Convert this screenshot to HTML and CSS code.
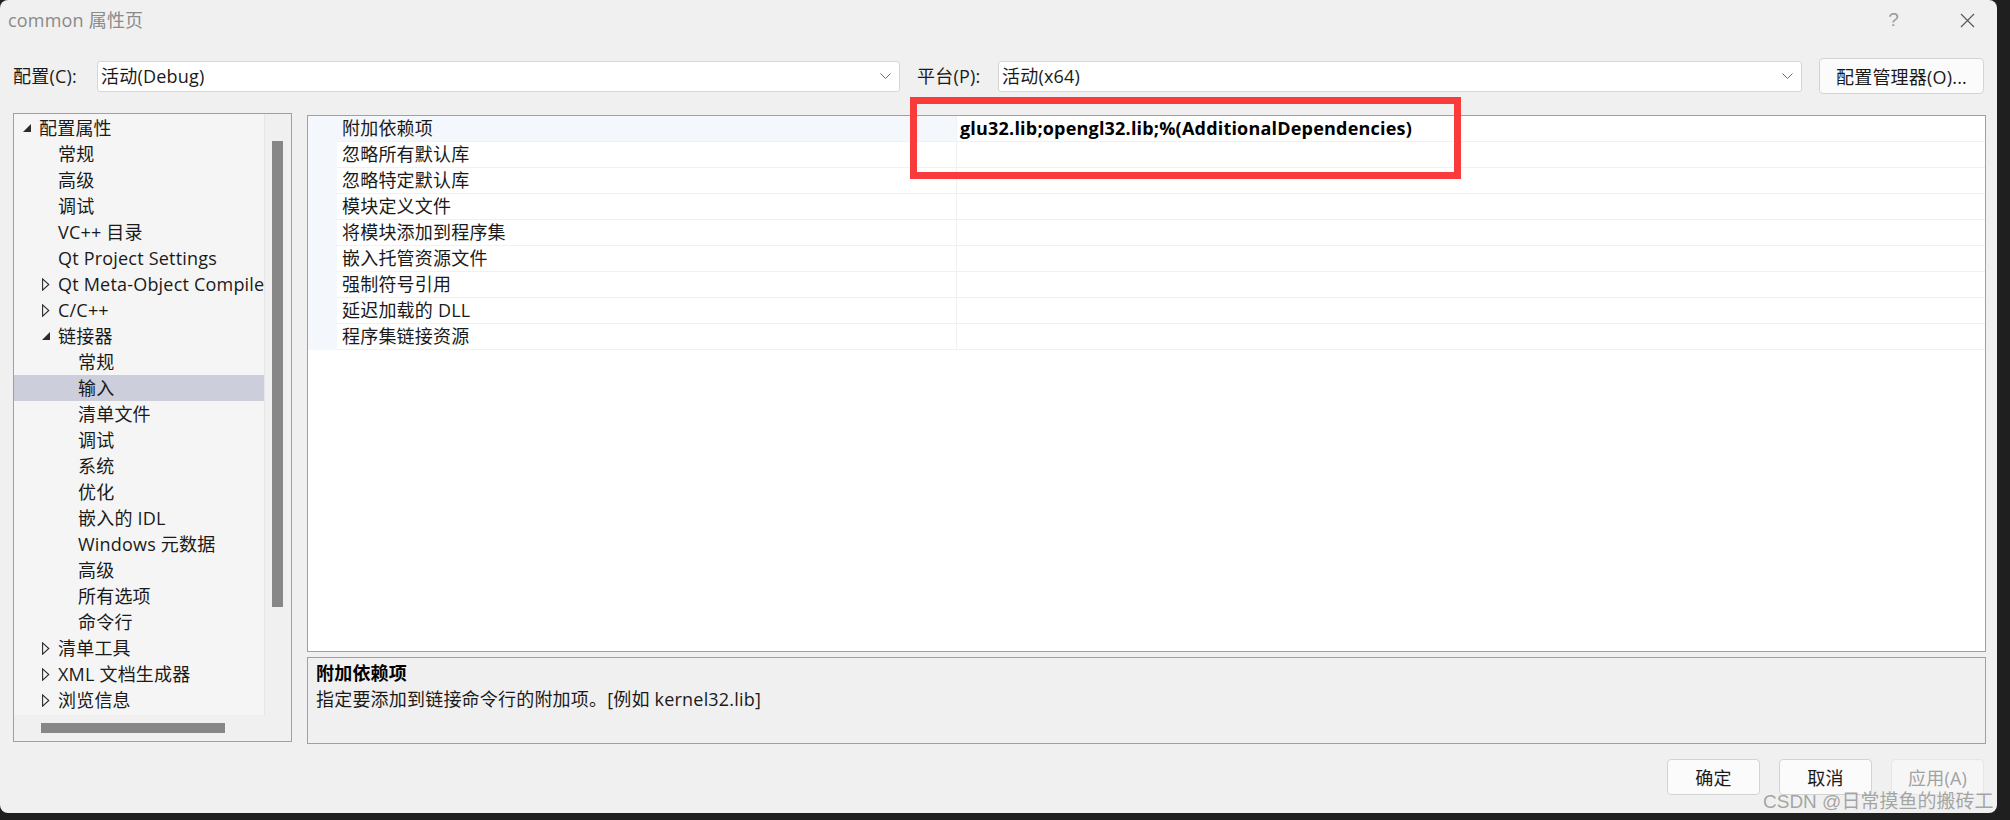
FILE: index.html
```html
<!DOCTYPE html>
<html lang="zh-CN">
<head>
<meta charset="utf-8">
<title>common 属性页</title>
<link rel="stylesheet" href="styles.css">
</head>
<body>
<div class="dialog">
  <div class="titlebar">
    <span class="title">common 属性页</span>
    <div class="caption">
      <span class="help">?</span>
      <svg class="close" width="15" height="15" viewBox="0 0 15 15"><path d="M1 1 L14 14 M14 1 L1 14" stroke="#5a5a5a" stroke-width="1.2" fill="none"/></svg>
    </div>
  </div>

  <div class="config-row">
    <span class="label label-c">配置(C):</span>
    <div class="combo combo-c"><span class="combo-text">活动(Debug)</span><svg class="chev" width="11" height="7" viewBox="0 0 11 7"><path d="M0.5 0.5 L5.5 5.5 L10.5 0.5" stroke="#6a6a6a" stroke-width="1" fill="none"/></svg></div>
    <span class="label label-p">平台(P):</span>
    <div class="combo combo-p"><span class="combo-text">活动(x64)</span><svg class="chev" width="11" height="7" viewBox="0 0 11 7"><path d="M0.5 0.5 L5.5 5.5 L10.5 0.5" stroke="#6a6a6a" stroke-width="1" fill="none"/></svg></div>
    <button class="btn btn-manager">配置管理器(O)...</button>
  </div>

  <div class="main">
    <div class="tree">
      <div class="tree-content">
        <div class="row l0"><span class="exp"><svg width="8" height="8" viewBox="0 0 8 8"><path d="M8 0 L8 8 L0 8 Z" fill="#2a2a2a"/></svg></span>配置属性</div>
        <div class="row l1"><span class="exp"></span>常规</div>
        <div class="row l1"><span class="exp"></span>高级</div>
        <div class="row l1"><span class="exp"></span>调试</div>
        <div class="row l1"><span class="exp"></span>VC++ 目录</div>
        <div class="row l1"><span class="exp"></span>Qt Project Settings</div>
        <div class="row l1"><span class="exp"><svg width="8" height="13" viewBox="0 0 8 13"><path d="M0.6 0.8 L6.8 6.5 L0.6 12.2 Z" fill="none" stroke="#2a2a2a" stroke-width="1.1"/></svg></span><span class="clip">Qt Meta-Object Compiler</span></div>
        <div class="row l1"><span class="exp"><svg width="8" height="13" viewBox="0 0 8 13"><path d="M0.6 0.8 L6.8 6.5 L0.6 12.2 Z" fill="none" stroke="#2a2a2a" stroke-width="1.1"/></svg></span>C/C++</div>
        <div class="row l1"><span class="exp"><svg width="8" height="8" viewBox="0 0 8 8"><path d="M8 0 L8 8 L0 8 Z" fill="#2a2a2a"/></svg></span>链接器</div>
        <div class="row l2"><span class="exp"></span>常规</div>
        <div class="row l2 selected"><span class="exp"></span>输入</div>
        <div class="row l2"><span class="exp"></span>清单文件</div>
        <div class="row l2"><span class="exp"></span>调试</div>
        <div class="row l2"><span class="exp"></span>系统</div>
        <div class="row l2"><span class="exp"></span>优化</div>
        <div class="row l2"><span class="exp"></span>嵌入的 IDL</div>
        <div class="row l2"><span class="exp"></span>Windows 元数据</div>
        <div class="row l2"><span class="exp"></span>高级</div>
        <div class="row l2"><span class="exp"></span>所有选项</div>
        <div class="row l2"><span class="exp"></span>命令行</div>
        <div class="row l1"><span class="exp"><svg width="8" height="13" viewBox="0 0 8 13"><path d="M0.6 0.8 L6.8 6.5 L0.6 12.2 Z" fill="none" stroke="#2a2a2a" stroke-width="1.1"/></svg></span>清单工具</div>
        <div class="row l1"><span class="exp"><svg width="8" height="13" viewBox="0 0 8 13"><path d="M0.6 0.8 L6.8 6.5 L0.6 12.2 Z" fill="none" stroke="#2a2a2a" stroke-width="1.1"/></svg></span>XML 文档生成器</div>
        <div class="row l1"><span class="exp"><svg width="8" height="13" viewBox="0 0 8 13"><path d="M0.6 0.8 L6.8 6.5 L0.6 12.2 Z" fill="none" stroke="#2a2a2a" stroke-width="1.1"/></svg></span>浏览信息</div>
      </div>
      <div class="vtrack"><div class="vthumb"></div></div>
      <div class="htrack"><div class="hthumb"></div></div>
      <div class="corner"></div>
    </div>

    <div class="right">
      <div class="grid">
        <div class="prow first"><span class="gutter"></span><span class="pname">附加依赖项</span><span class="pval">glu32.lib;opengl32.lib;%(AdditionalDependencies)</span></div>
        <div class="prow"><span class="gutter"></span><span class="pname">忽略所有默认库</span><span class="pval"></span></div>
        <div class="prow"><span class="gutter"></span><span class="pname">忽略特定默认库</span><span class="pval"></span></div>
        <div class="prow"><span class="gutter"></span><span class="pname">模块定义文件</span><span class="pval"></span></div>
        <div class="prow"><span class="gutter"></span><span class="pname">将模块添加到程序集</span><span class="pval"></span></div>
        <div class="prow"><span class="gutter"></span><span class="pname">嵌入托管资源文件</span><span class="pval"></span></div>
        <div class="prow"><span class="gutter"></span><span class="pname">强制符号引用</span><span class="pval"></span></div>
        <div class="prow"><span class="gutter"></span><span class="pname">延迟加载的 DLL</span><span class="pval"></span></div>
        <div class="prow"><span class="gutter"></span><span class="pname">程序集链接资源</span><span class="pval"></span></div>
      </div>
      <div class="desc">
        <div class="desc-title">附加依赖项</div>
        <div class="desc-text">指定要添加到链接命令行的附加项。[例如 kernel32.lib]</div>
      </div>
    </div>
  </div>

  <div class="footer">
    <button class="btn btn-foot">确定</button>
    <button class="btn btn-foot">取消</button>
    <button class="btn btn-foot disabled">应用(A)</button>
  </div>

  <div class="highlight"></div>
  <div class="watermark">CSDN @日常摸鱼的搬砖工</div>
</div>
</body>
</html>
```

FILE: styles.css
```css
* { box-sizing: border-box; }

html, body {
  margin: 0;
  padding: 0;
  width: 2010px;
  height: 820px;
  overflow: hidden;
  background: #1f1f1f;
}

body {
  font-family: "Open Sans", "Noto Sans CJK SC", sans-serif;
  font-size: 18px;
  color: #1a1a1a;
  letter-spacing: 0.2px;
}

.dialog {
  position: relative;
  width: 1997px;
  height: 813px;
  background: #f0f0f0;
  border-radius: 8px;
  display: flex;
  flex-direction: column;
  overflow: hidden;
}

/* title bar */
.titlebar {
  height: 40px;
  display: flex;
  align-items: center;
  padding-left: 8px;
}
.title {
  color: #8a8a8a;
  font-size: 18px;
  line-height: 40px;
}
.caption {
  margin-left: auto;
  display: flex;
  align-items: center;
  padding-right: 22px;
}
.help {
  color: #9a9a9a;
  font-size: 19px;
  font-family: "Liberation Sans", sans-serif;
  margin-right: 61px;
}
.close { display: block; }

/* configuration row */
.config-row {
  margin-top: 18px;
  height: 36px;
  display: flex;
  align-items: center;
  padding-left: 13px;
}
.label { line-height: 30px; }
.label-c { width: 84px; }
.label-p { width: 81px; margin-left: 17px; }
.combo {
  height: 31px;
  background: #ffffff;
  border: 1px solid #d6d6d6;
  border-radius: 3px;
  display: flex;
  align-items: center;
  padding-left: 3px;
  padding-right: 8px;
}
.combo-c { width: 803px; }
.combo-p { width: 804px; }
.combo-text { flex: 1; line-height: 29px; }
.chev { display: block; }

.btn {
  font-family: "Open Sans", "Noto Sans CJK SC", sans-serif;
  font-size: 18px;
  letter-spacing: 0.2px;
  color: #1a1a1a;
  background: #fbfbfb;
  border: 1px solid #d3d3d3;
  border-radius: 4px;
  height: 36px;
  padding: 0;
  display: flex;
  align-items: center;
  justify-content: center;
}
.btn-manager {
  width: 165px;
  margin-left: 17px;
}

/* main area */
.main {
  margin-top: 19px;
  padding-left: 13px;
  display: flex;
  height: 631px;
}

.tree {
  width: 279px;
  height: 629px;
  border: 1px solid #a0a0a0;
  background: #f0f0f0;
  display: grid;
  grid-template-columns: 250px 27px;
  grid-template-rows: 601px 26px;
}
.tree-content {
  background: #f5f5f5;
  overflow: hidden;
  padding-top: 1px;
}
.row {
  height: 26px;
  line-height: 26px;
  display: flex;
  align-items: center;
  white-space: nowrap;
  color: #1a1a1a;
}
.row.l0 { padding-left: 9px; }
.row.l1 { padding-left: 28px; }
.row.l2 { padding-left: 48px; }
.row.selected { background: #cccedb; }
.clip {
  overflow: hidden;
  text-overflow: clip;
  min-width: 0;
}
.exp {
  width: 16px;
  flex: 0 0 16px;
  display: flex;
  align-items: center;
}
.exp svg { display: block; }

.vtrack {
  background: #f0f0f0;
  border-left: 1px solid #e6e6e6;
  padding-top: 27px;
  padding-left: 7px;
}
.vthumb {
  width: 11px;
  height: 466px;
  background: #878787;
}
.htrack {
  background: #f0f0f0;
  padding-top: 8px;
  padding-left: 27px;
}
.hthumb {
  width: 184px;
  height: 10px;
  background: #878787;
}
.corner { background: #f0f0f0; }

/* right side */
.right {
  margin-left: 15px;
  width: 1679px;
  display: flex;
  flex-direction: column;
}
.grid {
  margin-top: 2px;
  height: 537px;
  border: 1px solid #a0a0a0;
  background: #ffffff;
}
.prow {
  display: flex;
  height: 26px;
}
.gutter {
  width: 29px;
  flex: 0 0 29px;
  background: #f4f7fb;
}
.pname {
  width: 620px;
  flex: 0 0 620px;
  padding-left: 5px;
  line-height: 25px;
  border-bottom: 1px solid #eef1f6;
  border-right: 1px solid #eef1f6;
  white-space: nowrap;
}
.prow.first .pname { background: #f4f7fb; }
.pval {
  flex: 1;
  padding-left: 3px;
  line-height: 25px;
  border-bottom: 1px solid #eef1f6;
  font-weight: bold;
  color: #000;
  white-space: nowrap;
}

.desc {
  margin-top: 5px;
  height: 87px;
  border: 1px solid #a0a0a0;
  background: #f0f0f0;
  padding: 2px 8px 0;
}
.desc-title {
  line-height: 26px;
  font-weight: bold;
  color: #000;
}
.desc-text {
  line-height: 27px;
  color: #1a1a1a;
}

/* footer buttons */
.footer {
  margin-top: 15px;
  display: flex;
  justify-content: flex-end;
  gap: 19px;
  padding-right: 13px;
}
.btn-foot { width: 93px; }
.btn-foot.disabled {
  color: #a2a2a2;
  background: #f6f6f6;
  border-color: #e6e6e6;
}

/* annotation overlay */
.highlight {
  position: absolute;
  left: 910px;
  top: 97px;
  width: 551px;
  height: 82px;
  border: 7px solid #f93b3b;
}
.watermark {
  position: absolute;
  left: 1763px;
  top: 789px;
  font-size: 19px;
  line-height: 26px;
  letter-spacing: 0;
  color: rgba(150, 150, 150, 0.85);
  white-space: nowrap;
  font-family: "Liberation Sans", "Noto Sans CJK SC", sans-serif;
}
```
